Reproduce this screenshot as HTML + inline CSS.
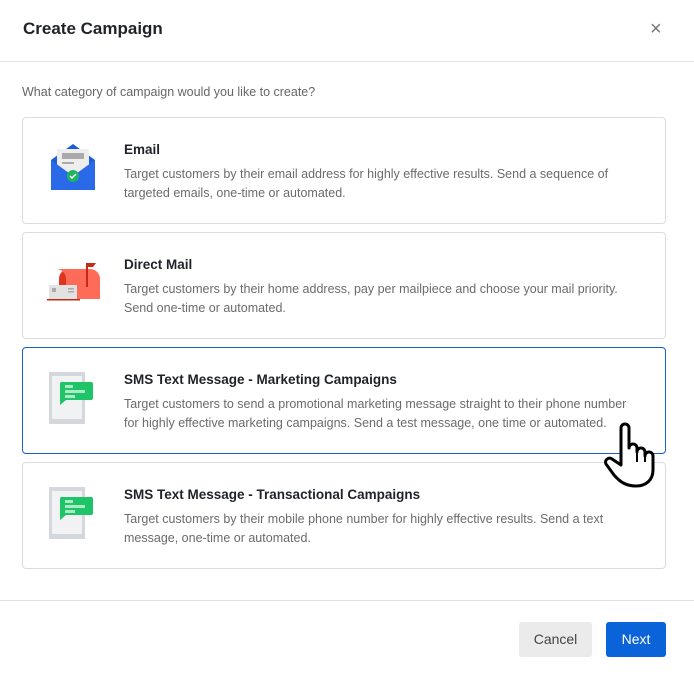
<!DOCTYPE html>
<html><head><meta charset="utf-8"><style>
body{margin:0;width:694px;height:675px;background:#fff;font-family:"Liberation Sans",sans-serif;position:relative;overflow:hidden;color:#222}
.t{position:absolute;left:23px;top:19px;font-size:17px;font-weight:bold;color:#1f2329}
.x{position:absolute;left:650px;top:18px;font-size:20px;color:#777}
.hr{position:absolute;left:0;width:694px;height:1px;background:#e2e2e2}
.q{position:absolute;left:22px;top:85px;font-size:12.5px;color:#666}
.c{position:absolute;left:22px;width:642px;height:105px;border:1px solid #dcdcdc;border-radius:4px}
.c.sel{border-color:#1a5fc8}
.c h3{position:absolute;left:101px;top:24px;margin:0;font-size:13.5px;font-weight:bold;color:#1f2329}
.c p{position:absolute;left:101px;top:47px;margin:0;width:518px;font-size:12.5px;line-height:19px;color:#6b6b6b}
.c svg{position:absolute;left:24px;top:22px}
.btn{position:absolute;top:622px;height:35px;border-radius:3px;font-size:14px;line-height:35px;text-align:center}
</style></head><body>
<div class="t">Create Campaign</div>
<div class="x">×</div>
<div class="hr" style="top:61px"></div>
<div class="q">What category of campaign would you like to create?</div>

<div class="c" style="top:117px"><svg width="50" height="50" viewBox="0 0 50 50">
<path d="M4 20 L26 4 L48 20 V50 H4Z" fill="#1a5fd8"/>
<rect x="10" y="9" width="32" height="24" fill="#eee"/><rect x="15" y="13" width="22" height="6" fill="#aaa"/><rect x="15" y="22" width="12" height="2" fill="#aaa"/>
<path d="M4 20 L26 36 L48 20 V50 H4Z" fill="#2a6ae8"/>
<circle cx="26" cy="36" r="6" fill="#1db462"/><path d="M23 36l2 2 4-4" stroke="#fff" stroke-width="1.5" fill="none"/></svg>
<h3>Email</h3><p>Target customers by their email address for highly effective results. Send a sequence of targeted emails, one-time or automated.</p></div>

<div class="c" style="top:232px"><svg width="60" height="50" viewBox="0 0 60 50" style="left:20px">
<path d="M16 24 a10 10 0 0 1 20 0 V44 H16Z" fill="#e0341e"/>
<path d="M26 14 H50 a10 10 0 0 1 10 10 V44 H26 V24 a10 10 0 0 0 -10 -10Z" fill="#ff6b59" transform="translate(-3 0)"/>
<rect x="43" y="8" width="2" height="24" fill="#c42a14"/><path d="M45 8 H53 L50 12 H45Z" fill="#c42a14"/>
<rect x="6" y="30" width="28" height="15" fill="#e2e2e2"/><rect x="9" y="33" width="4" height="4" fill="#aaa"/><rect x="25" y="33" width="6" height="1.5" fill="#aaa"/><rect x="25" y="36" width="6" height="1.5" fill="#aaa"/>
<rect x="4" y="44" width="33" height="1.5" fill="#c42a14"/></svg>
<h3>Direct Mail</h3><p>Target customers by their home address, pay per mailpiece and choose your mail priority. Send one-time or automated.</p></div>

<div class="c sel" style="top:347px"><svg width="50" height="56" viewBox="0 0 50 56" style="top:24px">
<rect x="2" y="0" width="36" height="52" fill="#d4d8dc"/><rect x="5" y="4" width="30" height="43" fill="#f0f2f4"/>
<path d="M14 10 H44 a2 2 0 0 1 2 2 V26 a2 2 0 0 1 -2 2 H19 L13 33 V12 a2 2 0 0 1 1 -2Z" fill="#1fc468"/>
<rect x="18" y="13" width="8" height="3" fill="#a8ecc4"/><rect x="18" y="18" width="20" height="3" fill="#a8ecc4"/><rect x="18" y="23" width="10" height="3" fill="#a8ecc4"/></svg>
<h3>SMS Text Message - Marketing Campaigns</h3><p style="width:508px">Target customers to send a promotional marketing message straight to their phone number for highly effective marketing campaigns. Send a test message, one time or automated.</p></div>

<div class="c" style="top:462px"><svg width="50" height="56" viewBox="0 0 50 56" style="top:24px">
<rect x="2" y="0" width="36" height="52" fill="#d4d8dc"/><rect x="5" y="4" width="30" height="43" fill="#f0f2f4"/>
<path d="M14 10 H44 a2 2 0 0 1 2 2 V26 a2 2 0 0 1 -2 2 H19 L13 33 V12 a2 2 0 0 1 1 -2Z" fill="#1fc468"/>
<rect x="18" y="13" width="8" height="3" fill="#a8ecc4"/><rect x="18" y="18" width="20" height="3" fill="#a8ecc4"/><rect x="18" y="23" width="10" height="3" fill="#a8ecc4"/></svg>
<h3>SMS Text Message - Transactional Campaigns</h3><p>Target customers by their mobile phone number for highly effective results. Send a text message, one-time or automated.</p></div>

<svg style="position:absolute;left:600px;top:420px" width="60" height="70" viewBox="0 0 60 70">
<path d="M21 45 V8 a4 4 0 0 1 8 0 V28 a4 4 0 0 1 8 0 V32 a4 4 0 0 1 8 0 V36 a4 4 0 0 1 8 0 V50 C53 60 46 66 36 66 C26 66 20 62 14 55 L6 44 a4 4 0 0 1 6 -5 Z" fill="#fff" stroke="#000" stroke-width="3" stroke-linejoin="round"/>
<path d="M37 30 V42 M45 34 V42" stroke="#000" stroke-width="2"/></svg>

<div class="hr" style="top:600px"></div>
<div class="btn" style="left:519px;width:73px;background:#ebebeb;color:#444">Cancel</div>
<div class="btn" style="left:606px;width:60px;background:#0a63d8;color:#fff">Next</div>
</body></html>
